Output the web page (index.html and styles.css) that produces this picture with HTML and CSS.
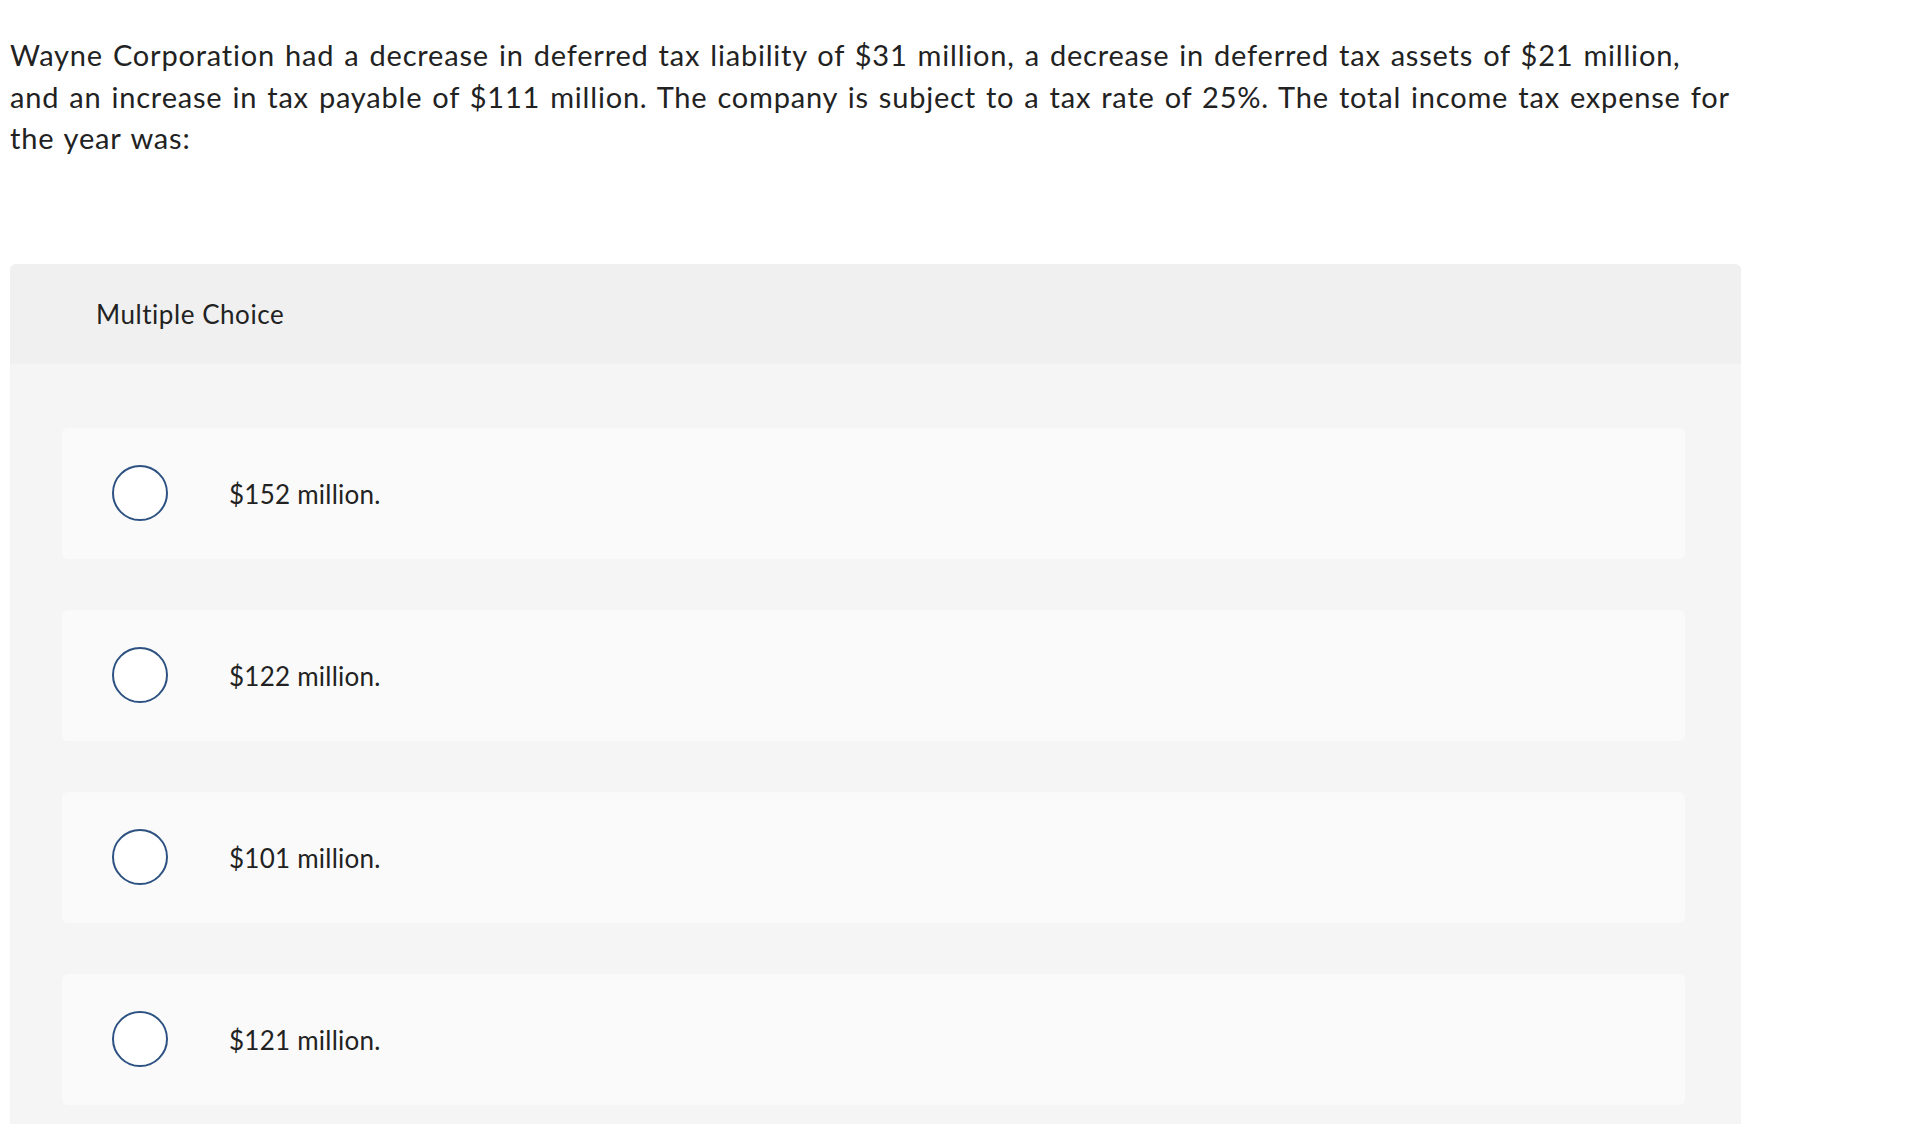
FILE: index.html
```html
<!DOCTYPE html>
<html lang="en">
<head>
<meta charset="utf-8">
<title>Multiple Choice</title>
<link rel="stylesheet" href="styles.css">
</head>
<body>
<main class="page">
  <p class="question">Wayne Corporation had a decrease in deferred tax liability of $31 million, a decrease in deferred tax assets of $21 million, and an increase in tax payable of $111 million. The company is subject to a tax rate of 25%. The total income tax expense for the year was:</p>
  <section class="mc">
    <header class="mc-head">Multiple Choice</header>
    <div class="mc-body">
      <label class="option"><span class="radio"></span><span class="opt-text">$152 million.</span></label>
      <label class="option"><span class="radio"></span><span class="opt-text">$122 million.</span></label>
      <label class="option"><span class="radio"></span><span class="opt-text">$101 million.</span></label>
      <label class="option"><span class="radio"></span><span class="opt-text">$121 million.</span></label>
    </div>
  </section>
</main>
</body>
</html>
```

FILE: styles.css
```css
html, body {
  margin: 0;
  padding: 0;
  background: #ffffff;
}
body {
  font-family: Lato, "Open Sans", sans-serif;
  color: #222222;
}
.page {
  padding: 0 171px 0 10px;
}
.question {
  margin: 0;
  padding-top: 34px;
  max-width: 1726px;
  font-size: 29px;
  line-height: 41.5px;
  letter-spacing: 0.8px;
  word-spacing: 1.8px;
}
.mc {
  margin-top: 105px;
  border-radius: 6px 6px 0 0;
  overflow: hidden;
  background: #f5f5f5;
}
.mc-head {
  background: #f0f0f0;
  height: 100px;
  display: flex;
  align-items: center;
  padding-left: 86px;
  font-size: 26px;
  letter-spacing: 0.55px;
}
.mc-body {
  padding: 64px 56px 40px 52px;
  display: flex;
  flex-direction: column;
  gap: 51px;
}
.option {
  background: #fafafa;
  border-radius: 6px;
  height: 131px;
  display: flex;
  align-items: center;
  padding-left: 50px;
}
.radio {
  width: 52px;
  height: 52px;
  border: 2px solid #2d5282;
  border-radius: 50%;
  background: #ffffff;
  flex: none;
}
.opt-text {
  margin-left: 61px;
  padding-top: 2px;
  font-size: 26px;
  letter-spacing: 0.25px;
}
```
